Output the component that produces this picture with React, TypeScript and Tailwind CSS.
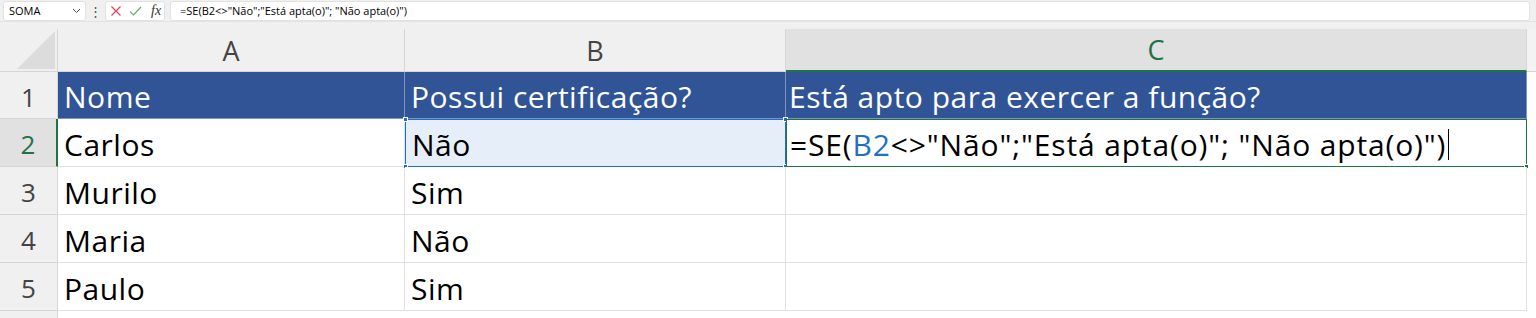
import React from "react";

const rows = [
  { n: "1", a: "Nome", b: "Possui certificação?", c: "Está apto para exercer a função?", head: true },
  { n: "2", a: "Carlos", b: "Não", c: "" },
  { n: "3", a: "Murilo", b: "Sim", c: "" },
  { n: "4", a: "Maria", b: "Não", c: "" },
  { n: "5", a: "Paulo", b: "Sim", c: "" },
];

function Handle({ pos }: { pos: string }) {
  return <span className={`absolute w-[5px] h-[5px] bg-[#1f6fc5] border border-white ${pos}`} />;
}

function FormulaBar() {
  return (
    <div className="h-[29px] bg-[#f0f0f0] pt-[1px]">
      <div className="h-[21px] flex items-center font-['Open_Sans'] text-[11px] text-black border-b border-[#e3e3e3]">
        <div className="ml-[3px] w-[83px] h-[20px] bg-white rounded-[3px] border border-[#e2e2e2] flex items-center justify-between pl-[5px] pr-[4px]">
          <span>SOMA</span>
          <svg width="9" height="6" viewBox="0 0 9 6" className="text-[#555]">
            <path d="M1 1l3.5 3.5L8 1" fill="none" stroke="currentColor" strokeWidth="1" />
          </svg>
        </div>
        <div className="w-[19px] flex justify-center text-[#555] text-[13px] leading-none">⋮</div>
        <div className="w-[60px] h-[20px] bg-white rounded-[3px] border border-[#e2e2e2] flex items-center pl-[4px] gap-[7px]">
          <svg width="12" height="12" viewBox="0 0 12 12">
            <path d="M1.5 1.5l9 9M10.5 1.5l-9 9" stroke="#e0454d" strokeWidth="1.2" />
          </svg>
          <svg width="13" height="12" viewBox="0 0 13 12">
            <path d="M1 6.5l3.5 3.5L12 2" fill="none" stroke="#5fb06a" strokeWidth="1.2" />
          </svg>
          <span className="font-['Liberation_Serif'] italic text-[14px] leading-none text-[#333] ml-[2px]">fx</span>
        </div>
        <div className="ml-[5px] mr-[6px] flex-1 h-[20px] bg-white rounded-[3px] border border-[#e2e2e2] flex items-center pl-[9px]">
          =SE(B2&lt;&gt;"Não";"Está apta(o)"; "Não apta(o)")
        </div>
      </div>
    </div>
  );
}

export default function App() {
  return (
    <div className="w-[1536px] h-[318px] overflow-hidden bg-white">
      <FormulaBar />
      <div className="grid grid-cols-[58px_347px_381px_741px_1fr] grid-rows-[43px_47px_48px_48px_48px_48px_20px] font-['Open_Sans'] text-[30px] tracking-[0.5px]">
        <div className="bg-[#f0f0f0] border-r border-b border-[#d6d6d6] relative flex items-end justify-end p-[2px]">
          <svg width="38" height="38" viewBox="0 0 38 38">
            <path d="M38 0L38 38L0 38Z" fill="#dcdcdc" />
          </svg>
        </div>
        <div className="bg-[#f0f0f0] border-r border-b border-[#d6d6d6] flex items-center justify-center text-[#444] text-[27px] tracking-normal pt-[2px]">A</div>
        <div className="bg-[#f0f0f0] border-r border-b border-[#d6d6d6] flex items-center justify-center text-[#444] text-[27px] tracking-normal pt-[2px]">B</div>
        <div className="bg-[#e1e1e1] border-r border-b-2 border-r-[#d6d6d6] border-b-[#217346] flex items-center justify-center text-[#217346] text-[27px] tracking-normal pt-[2px]">C</div>
        <div className="bg-[#f3f3f3] border-b border-[#d6d6d6]" />

        {rows.map((r) => {
          const sel = r.n === "2";
          return (
            <React.Fragment key={r.n}>
              <div
                className={`flex items-center justify-center pt-[4px] text-[26px] tracking-normal border-b border-[#d6d6d6] ${
                  sel ? "bg-[#e1e1e1] text-[#217346] border-r-2 border-r-[#217346]" : "bg-[#f0f0f0] text-[#444] border-r border-r-[#d6d6d6]"
                }`}
              >
                {r.n}
              </div>
              <div
                className={`flex items-center pl-[6px] pt-[3px] whitespace-nowrap border-r border-b ${
                  r.head ? "bg-[#305496] text-white border-[#7f93bd]" : "bg-white text-black border-[#e1e1e1]"
                }`}
              >
                {r.a}
              </div>
              <div
                className={`relative flex items-center pl-[6px] pt-[3px] whitespace-nowrap border-r border-b ${
                  r.head
                    ? "bg-[#305496] text-white border-[#7f93bd]"
                    : sel
                    ? "bg-[#e6eff9] text-black border-[#1f6fc5] border-l border-t"
                    : "bg-white text-black border-[#e1e1e1]"
                }`}
              >
                {r.b}
                {sel && (
                  <>
                    <Handle pos="-top-[3px] -left-[3px]" />
                    <Handle pos="-bottom-[3px] -left-[3px]" />
                    <Handle pos="-top-[3px] -right-[3px]" />
                    <Handle pos="-bottom-[3px] -right-[3px]" />
                  </>
                )}
              </div>
              <div
                className={`relative flex items-center pl-[3px] pt-[3px] whitespace-nowrap ${
                  r.head
                    ? "bg-[#305496] text-white border-r border-b border-[#7f93bd]"
                    : sel
                    ? "bg-white text-black border border-[#217346]"
                    : "bg-white text-black border-r border-b border-[#e1e1e1]"
                }`}
              >
                {sel ? (
                  <>
                    <span className="tracking-[0.85px]">
                      =SE(<span className="text-[#1f6fc5]">B2</span>&lt;&gt;"Não";"Está apta(o)"; "Não apta(o)")
                    </span>
                    <span className="w-[1px] h-[31px] bg-black ml-[2px]" />
                    <span className="absolute -bottom-[3px] -right-[3px] w-[5px] h-[5px] bg-[#217346] border border-white" />
                  </>
                ) : (
                  r.c
                )}
              </div>
              <div className="bg-white" />
            </React.Fragment>
          );
        })}
        <div className="bg-[#f0f0f0] border-r border-[#d6d6d6]" />
        <div className="col-span-4 bg-white" />
      </div>
    </div>
  );
}
